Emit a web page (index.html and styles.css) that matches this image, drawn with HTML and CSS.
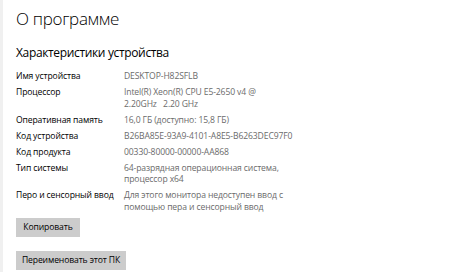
FILE: index.html
```html
<!DOCTYPE html>
<html lang="ru">
<head>
<meta charset="utf-8">
<link rel="stylesheet" href="styles.css">
</head>
<body>
<div class="strip"></div>
<main class="content">
  <h1 class="title">О программе</h1>
  <h2 class="section">Характеристики устройства</h2>
  <div class="specs">
    <div class="label">Имя устройства</div><div class="value">DESKTOP-H82SFLB</div>
    <div class="label">Процессор</div><div class="value">Intel(R) Xeon(R) CPU E5-2650 v4 @<br>2.20GHz&nbsp;&nbsp;&nbsp;2.20 GHz</div>
    <div class="label">Оперативная память</div><div class="value">16,0 ГБ (доступно: 15,8 ГБ)</div>
    <div class="label">Код устройства</div><div class="value">B26BA85E-93A9-4101-A8E5-B6263DEC97F0</div>
    <div class="label">Код продукта</div><div class="value">00330-80000-00000-AA868</div>
    <div class="label">Тип системы</div><div class="value">64-разрядная операционная система,<br>процессор x64</div>
    <div class="label">Перо и сенсорный ввод</div><div class="value">Для этого монитора недоступен ввод с<br>помощью пера и сенсорный ввод</div>
  </div>
  <button class="btn btn-copy">Копировать</button>
  <button class="btn btn-rename">Переименовать этот ПК</button>
</main>
</body>
</html>
```
FILE: styles.css
```css
html, body {
  margin: 0;
  padding: 0;
  background: #ffffff;
  width: 450px;
  height: 272px;
  overflow: hidden;
}
body {
  display: flex;
  font-family: "Open Sans", "Noto Sans", sans-serif;
  color: #000;
}
.strip {
  width: 3px;
  flex: none;
  background: #f0f0f0;
}
.content {
  padding-left: 13px;
  display: flex;
  flex-direction: column;
  align-items: flex-start;
}
.title {
  margin: 6.5px 0 0 0;
  font-size: 17px;
  font-weight: 300;
  line-height: 24px;
  letter-spacing: -0.3px;
}
.section {
  margin: 14px 0 0 0;
  font-size: 12px;
  font-weight: 400;
  line-height: 16px;
  letter-spacing: -0.35px;
}
.specs {
  margin-top: 10.5px;
  display: grid;
  grid-template-columns: 108px auto;
  row-gap: 4.5px;
  font-size: 8.6px;
  line-height: 11.5px;
  letter-spacing: -0.12px;
}
.label {
  color: #000;
}
.value {
  color: #6b6b6b;
}
.btn {
  font-family: inherit;
  font-size: 8.6px;
  letter-spacing: -0.12px;
  border: none;
  background: #cccccc;
  color: #000;
  height: 18.5px;
  padding: 0;
  line-height: 18.5px;
  text-align: center;
}
.btn-copy {
  margin-top: 5px;
  width: 64px;
}
.btn-rename {
  margin-top: 14.5px;
  width: 110px;
}
```
